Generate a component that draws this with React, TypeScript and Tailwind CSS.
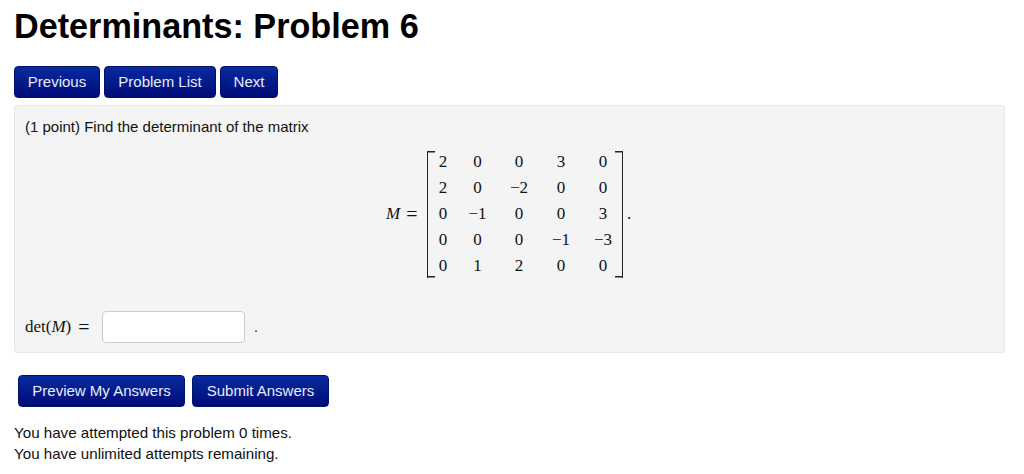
const navButton =
  "h-[32px] rounded-[4px] border border-[#00146e] bg-gradient-to-b from-[#0a2a9e] to-[#000a78] pt-[1px] text-center font-['Liberation_Sans',sans-serif] text-[15px] text-[#e8ecff]";

const matrix = [
  ["2", "0", "0", "3", "0"],
  ["2", "0", "−2", "0", "0"],
  ["0", "−1", "0", "0", "3"],
  ["0", "0", "0", "−1", "−3"],
  ["0", "1", "2", "0", "0"],
];

export default function App() {
  return (
    <div className="h-[474px] w-[1024px] overflow-hidden bg-white px-[14px] font-['Liberation_Sans',sans-serif] text-[#111]">
      <h1 className="pt-[5px] text-[34.2px] leading-[42px] font-bold text-black">
        Determinants: Problem 6
      </h1>

      <div className="mt-[19px] flex gap-[4px]">
        <button className={`${navButton} w-[86px]`}>Previous</button>
        <button className={`${navButton} w-[112px]`}>Problem List</button>
        <button className={`${navButton} w-[58px]`}>Next</button>
      </div>

      <div className="mt-[7px] h-[248px] w-[991px] rounded-[3px] border border-[#e6e6e6] bg-[#f4f4f4] px-[10px]">
        <p className="pt-[11px] text-[15px] leading-[20px]">(1 point) Find the determinant of the matrix</p>

        <div className="mt-[9px] flex h-[136px] items-center font-['Liberation_Serif',serif] text-[17px]">
          <div className="ml-[361px] flex items-center gap-[4px]">
            <span className="flex w-[37px] items-center gap-[6px] whitespace-nowrap">
              <i>M</i>
              <span className="text-[20px] leading-none">=</span>
            </span>
            <div className="grid h-[127px] w-[196px] grid-cols-[28px_41px_42px_42px_42px] grid-rows-[repeat(5,26px)] content-center items-center border-x-[1.5px] border-[#222] pl-[1px] text-center [background:linear-gradient(#222,#222)_left_top/7px_1.5px_no-repeat,linear-gradient(#222,#222)_left_bottom/7px_1.5px_no-repeat,linear-gradient(#222,#222)_right_top/7px_1.5px_no-repeat,linear-gradient(#222,#222)_right_bottom/7px_1.5px_no-repeat]">
              {matrix.flat().map((value, index) => (
                <span key={index}>{value}</span>
              ))}
            </div>
            <span className="self-center">.</span>
          </div>
        </div>

        <div className="mt-[29px] flex items-center">
          <span className="flex w-[77px] items-center gap-[7px] font-['Liberation_Serif',serif] text-[17px]">
            <span>
              det(<i>M</i>)
            </span>
            <span className="text-[20px] leading-none">=</span>
          </span>
          <input className="h-[32px] w-[143px] rounded-[4px] border border-[#cccccc] bg-white" />
          <span className="ml-[9px] text-[14px]">.</span>
        </div>
      </div>

      <div className="mt-[22px] ml-[4px] flex gap-[7px]">
        <button className={`${navButton} w-[167px]`}>Preview My Answers</button>
        <button className={`${navButton} w-[137px]`}>Submit Answers</button>
      </div>

      <div className="mt-[15px] text-[15.15px] leading-[21px]">
        <p>You have attempted this problem 0 times.</p>
        <p>You have unlimited attempts remaining.</p>
      </div>
    </div>
  );
}
